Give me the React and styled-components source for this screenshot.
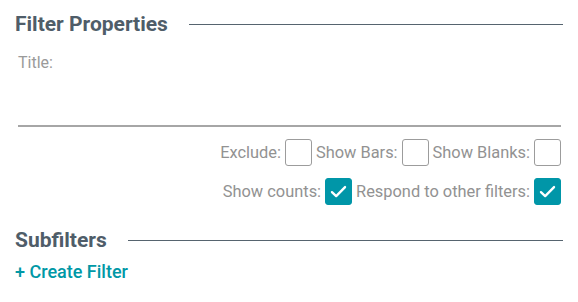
import React from 'react';
import styled, { createGlobalStyle } from 'styled-components';

const GlobalStyle = createGlobalStyle`
    body {
        margin: 0;
        background: #fff;
        font-family: Roboto, "Liberation Sans", sans-serif;
    }
`

const Panel = styled.div`
    padding: 9px 15px 0 15px;
    display: flex;
    flex-direction: column;
`

const SectionHeader = styled.div`
    display: flex;
    align-items: center;
    gap: 21px;
    height: 30px;
    margin-top: ${({ $top }) => $top || 0}px;
`

const SectionTitle = styled.h2`
    margin: 0;
    font-size: 21px;
    font-weight: 700;
    color: #4f5d69;
    white-space: nowrap;
`

const Rule = styled.div`
    flex: 1;
    height: 1px;
    background: #56646f;
`

const Field = styled.div`
    margin: 15px 2px 0 3px;
    border-bottom: 2px solid #a6a6a6;
    height: 71px;
`

const FieldLabel = styled.label`
    display: block;
    font-size: 16px;
    color: #9a9a9a;
    line-height: 18px;
`

const OptionRow = styled.div`
    display: flex;
    justify-content: flex-end;
    align-items: center;
    gap: 4px;
    margin-right: 2px;
    margin-top: 12px;
`

const OptionLabel = styled.span`
    font-size: 16.4px;
    color: #929292;
`

const Box = styled.span`
    box-sizing: border-box;
    width: 27px;
    height: 27px;
    border-radius: 3px;
    border: 1px solid ${({ $checked }) => ($checked ? '#0096a8' : '#9c9c9c')};
    background: ${({ $checked }) => ($checked ? '#0096a8' : '#fff')};
    display: flex;
    align-items: center;
    justify-content: center;
`

const Option = styled.span`
    display: flex;
    align-items: center;
    gap: 4px;
`

const CreateLink = styled.a`
    margin-top: 6px;
    font-size: 18px;
    font-weight: 500;
    color: #0098a6;
    text-decoration: none;
    cursor: pointer;
`

const Check = () => (
    <svg width="19" height="19" viewBox="0 0 18 18">
        <path d="M2.8 9.6 L6.8 13.4 L15.2 4.8" fill="none" stroke="#fff" strokeWidth="2.2" strokeLinecap="round" strokeLinejoin="round" />
    </svg>
)

const Checkbox = ({ label, checked }) => (
    <Option>
        <OptionLabel>{label}</OptionLabel>
        <Box $checked={checked}>{checked && <Check />}</Box>
    </Option>
)

const App = () => {
    return (
        <>
            <GlobalStyle />
            <Panel>
                <SectionHeader>
                    <SectionTitle>Filter Properties</SectionTitle>
                    <Rule />
                </SectionHeader>
                <Field>
                    <FieldLabel>Title:</FieldLabel>
                </Field>
                <OptionRow>
                    <Checkbox label="Exclude:" />
                    <Checkbox label="Show Bars:" />
                    <Checkbox label="Show Blanks:" />
                </OptionRow>
                <OptionRow>
                    <Checkbox label="Show counts:" checked />
                    <Checkbox label="Respond to other filters:" checked />
                </OptionRow>
                <SectionHeader $top={20}>
                    <SectionTitle>Subfilters</SectionTitle>
                    <Rule />
                </SectionHeader>
                <CreateLink>+ Create Filter</CreateLink>
            </Panel>
        </>
    );
};

export default App;
